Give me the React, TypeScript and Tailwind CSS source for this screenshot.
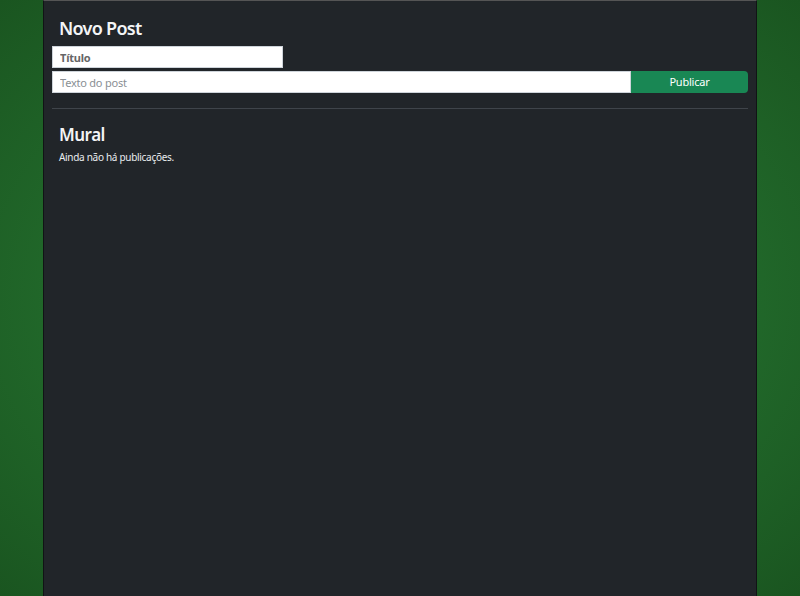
import React, { useState } from 'react';

type Post = { id: number; title: string; body: string };

const App: React.FC = () => {
  const [title, setTitle] = useState('');
  const [body, setBody] = useState('');
  const [posts, setPosts] = useState<Post[]>([]);

  const publish = () => {
    if (!title.trim() && !body.trim()) return;
    setPosts(prev => [{ id: Date.now(), title, body }, ...prev]);
    setTitle('');
    setBody('');
  };

  return (
    <div
      className="min-h-screen h-[596px] flex justify-center bg-[radial-gradient(ellipse_at_center,#27732f_0%,#21682a_60%,#1a5520_100%)]"
      style={{ fontFamily: '"Noto Sans", "Open Sans", sans-serif' }}
    >
      <div className="w-[714px] h-full bg-[#212529] border-x border-t border-[#111315] border-t-[#555] text-white px-2">
        <h2 className="pl-[7px] pt-[14px] text-[18px] leading-[26px] font-semibold tracking-[-0.04em] text-[#f4f5f6]">Novo Post</h2>
        <div className="mt-[5px] flex flex-col gap-[3px]">
          <input
            value={title}
            onChange={e => setTitle(e.target.value)}
            placeholder="Título"
            className="w-[231px] h-[22px] bg-white border border-[#ced4da] px-[7px] text-[11px] font-bold tracking-[-0.02em] text-[#333] placeholder:text-[#666] outline-none"
          />
          <div className="flex">
            <input
              value={body}
              onChange={e => setBody(e.target.value)}
              placeholder="Texto do post"
              className="flex-1 h-[22px] bg-white border border-[#ced4da] px-[7px] text-[11px] tracking-[-0.02em] text-[#333] placeholder:text-[#8a8f94] outline-none"
            />
            <button
              onClick={publish}
              className="w-[117px] h-[22px] bg-[#198754] rounded-r-[4px] text-[11px] tracking-[-0.02em] text-white"
            >
              Publicar
            </button>
          </div>
        </div>
        <hr className="mt-[15px] border-t border-[#3f444a]" />
        <h2 className="pl-[7px] pt-[14px] text-[17px] leading-[24px] font-semibold tracking-[-0.03em] text-[#f4f5f6]">Mural</h2>
        {posts.length === 0 ? (
          <p className="pl-[7px] mt-[2px] text-[10px] leading-[16px] tracking-[-0.03em] text-[#e9ecef]">Ainda não há publicações.</p>
        ) : (
          <div className="pl-[7px] mt-[4px] flex flex-col gap-2">
            {posts.map(p => (
              <div key={p.id} className="border border-[#3f444a] rounded p-2">
                <div className="text-[12px] font-semibold">{p.title}</div>
                <div className="text-[11px] text-[#ced4da]">{p.body}</div>
              </div>
            ))}
          </div>
        )}
      </div>
    </div>
  );
};

export default App;
